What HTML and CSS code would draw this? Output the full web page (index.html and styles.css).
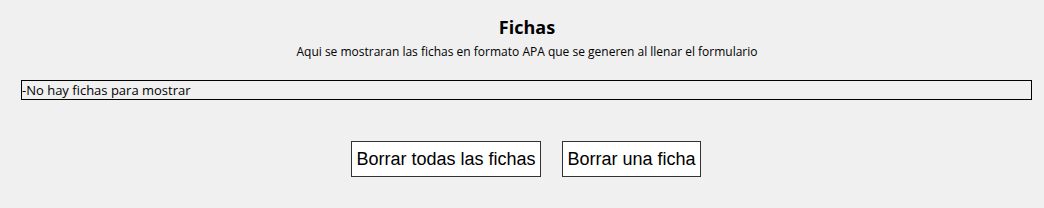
FILE: index.html
```html
<!DOCTYPE html>
<html lang="es">
<head>
  <meta charset="UTF-8" />
  <title>Fichas</title>
  <link rel="stylesheet" href="styles.css">
</head>
<body>
  <div class="header">
    <h2>Fichas</h2>
    <p>Aqui se mostraran las fichas en formato APA que se generen al llenar el formulario</p>
  </div>

  <div class="fichas" id="fichas">-No hay fichas para mostrar</div>

  <div class="acciones">
    <button>Borrar todas las fichas</button>
    <button>Borrar una ficha</button>
  </div>
</body>
</html>
```

FILE: styles.css
```css
body {
  margin: 0;
  background: #f0f0f0;
  color: black;
  font-family: "Open Sans", "Noto Sans", sans-serif;
}
.header {
  text-align: center;
  padding-top: 15px;
  padding-left: 10px;
}
h2 {
  font-size: 18px;
  margin: 0;
  line-height: 24px;
}
.header p {
  font-size: 12px;
  margin: 4px 0 0 0;
  line-height: 18px;
}
.fichas {
  margin: 19px 0 0 21px;
  width: 1011px;
  height: 20px;
  box-sizing: border-box;
  border: 1px solid black;
  font-size: 13px;
  line-height: 18px;
}
.acciones {
  display: flex;
  justify-content: center;
  gap: 21px;
  margin-top: 41px;
  padding-left: 8px;
}
button {
  font-family: "Liberation Sans", Arial, sans-serif;
  font-size: 18px;
  height: 36px;
  padding: 0 4.5px;
  background: white;
  border: 1px solid #333;
  color: black;
}
```
